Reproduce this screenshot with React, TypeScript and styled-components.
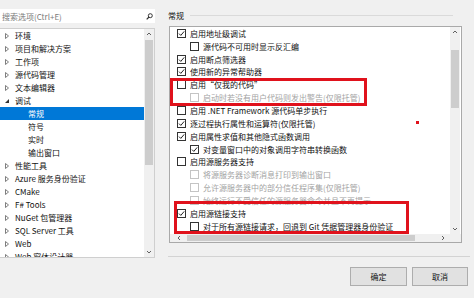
import React from 'react'
import styled, { createGlobalStyle } from 'styled-components'

const Global = createGlobalStyle`
  html, body {
    margin: 0;
    padding: 0;
    background: #f0f0f0;
  }
  body {
    font-family: "Noto Sans CJK SC", "Noto Sans", sans-serif;
    font-size: 8px;
    color: #111;
  }
`

type TreeItem = { label: string; level: number; arrow?: 'open' | 'closed'; selected?: boolean }

const tree: TreeItem[] = [
  { label: '环境', level: 0, arrow: 'closed' },
  { label: '项目和解决方案', level: 0, arrow: 'closed' },
  { label: '工作项', level: 0, arrow: 'closed' },
  { label: '源代码管理', level: 0, arrow: 'closed' },
  { label: '文本编辑器', level: 0, arrow: 'closed' },
  { label: '调试', level: 0, arrow: 'open' },
  { label: '常规', level: 1, selected: true },
  { label: '符号', level: 1 },
  { label: '实时', level: 1 },
  { label: '输出窗口', level: 1 },
  { label: '性能工具', level: 0, arrow: 'closed' },
  { label: 'Azure 服务身份验证', level: 0, arrow: 'closed' },
  { label: 'CMake', level: 0, arrow: 'closed' },
  { label: 'F# Tools', level: 0, arrow: 'closed' },
  { label: 'NuGet 包管理器', level: 0, arrow: 'closed' },
  { label: 'SQL Server 工具', level: 0, arrow: 'closed' },
  { label: 'Web', level: 0, arrow: 'closed' },
  { label: 'Web 窗体设计器', level: 0, arrow: 'closed' },
]

type Option = { text: string; checked?: boolean; indent?: number; disabled?: boolean }

const options: Option[] = [
  { text: '启用地址级调试', checked: true },
  { text: '源代码不可用时显示反汇编', indent: 1 },
  { text: '启用断点筛选器', checked: true },
  { text: '使用新的异常帮助器', checked: true },
  { text: '启用“仅我的代码”' },
  { text: '启动时若没有用户代码则发出警告(仅限托管)', indent: 1, disabled: true },
  { text: '启用 .NET Framework 源代码单步执行' },
  { text: '逐过程执行属性和运算符(仅限托管)', checked: true },
  { text: '启用属性求值和其他隐式函数调用', checked: true },
  { text: '对变量窗口中的对象调用字符串转换函数', checked: true, indent: 1 },
  { text: '启用源服务器支持' },
  { text: '将源服务器诊断消息打印到输出窗口', indent: 1, disabled: true },
  { text: '允许源服务器中的部分信任程序集(仅限托管)', indent: 1, disabled: true },
  { text: '始终运行不受信任的源服务器命令并且不再提示', indent: 1, disabled: true },
  { text: '启用源链接支持', checked: true },
  { text: '对于所有源链接请求，回退到 Git 凭据管理器身份验证', indent: 1 },
]

const Dialog = styled.div`
  position: relative;
  width: 474px;
  height: 298px;
  overflow: hidden;
  background: #f0f0f0;
  display: flex;
`

/* left side */
const LeftPane = styled.div`
  width: 155px;
  padding-top: 9px;
  display: flex;
  flex-direction: column;
  gap: 5px;
`

const Search = styled.div`
  height: 14px;
  background: #fff;
  display: flex;
  align-items: center;
  justify-content: space-between;
  padding: 0 2px 0 2px;
  color: #7a7a7a;
`

const TreeBox = styled.div`
  height: 228px;
  background: #fff;
  border: 1px solid #cfcfcf;
  border-left: none;
  display: flex;
  overflow: hidden;
`

const TreeItems = styled.div`
  flex: 1;
  display: flex;
  flex-direction: column;
`

const TreeRow = styled.div<{ $selected?: boolean }>`
  flex: none;
  height: 13px;
  display: flex;
  align-items: center;
  background: ${(p) => (p.$selected ? '#0078d7' : 'transparent')};
  color: ${(p) => (p.$selected ? '#fff' : '#111')};
  white-space: nowrap;
`

const Arrow = styled.span`
  width: 15px;
  flex: none;
  display: flex;
  justify-content: flex-start;
  padding-left: 5px;
  box-sizing: border-box;
`

const Indent = styled.span`
  width: 28px;
  flex: none;
`

const VScroll = styled.div<{ $thumbTop: number; $thumbHeight: number }>`
  flex: none;
  width: 10px;
  background: #f0f0f0;
  position: relative;
  display: flex;
  flex-direction: column;
  justify-content: space-between;
  align-items: center;
  padding: 2px 0;
  box-sizing: border-box;
  &::before {
    content: '';
    position: absolute;
    left: 1px;
    right: 1px;
    top: ${(p) => p.$thumbTop}px;
    height: ${(p) => p.$thumbHeight}px;
    background: #cdcdcd;
  }
`

/* right side */
const RightPane = styled.div`
  flex: 1;
  padding: 9px 0 0 13px;
  display: flex;
  flex-direction: column;
`

const Heading = styled.div`
  height: 12px;
  display: flex;
  align-items: center;
  gap: 6px;
  padding-right: 21px;
  font-size: 8px;
  &::after {
    content: '';
    flex: 1;
    height: 1px;
    background: #dadada;
  }
`

const OptionBox = styled.div`
  margin: 5px 0 0 1px;
  width: 293px;
  height: 217px;
  box-sizing: border-box;
  border: 1px solid #a9a9a9;
  background: #fff;
  display: grid;
  grid-template-columns: 1fr 11px;
  grid-template-rows: 1fr 8px;
  overflow: hidden;
`

const OptionList = styled.div`
  overflow: hidden;
  display: flex;
  flex-direction: column;
`

const OptionRow = styled.div<{ $indent: number; $disabled?: boolean }>`
  flex: none;
  height: 12.85px;
  display: flex;
  align-items: center;
  gap: 4px;
  padding-left: ${(p) => 7 + p.$indent * 13}px;
  color: ${(p) => (p.$disabled ? '#a3a3a3' : '#111')};
  white-space: nowrap;
`

const Box = styled.span<{ $disabled?: boolean }>`
  width: 7px;
  height: 7px;
  flex: none;
  border: 1px solid ${(p) => (p.$disabled ? '#c4c4c4' : '#333')};
  background: #fff;
  display: flex;
  align-items: center;
  justify-content: center;
`

const HScroll = styled.div`
  background: #f0f0f0;
  display: flex;
  align-items: center;
  padding: 0 0 0 6px;
`

const HThumb = styled.div`
  margin-left: 5px;
  width: 228px;
  height: 6px;
  background: #cdcdcd;
`

const HEnd = styled.div`
  margin-left: auto;
  width: 14px;
  display: flex;
  justify-content: center;
`

const Corner = styled.div`
  background: #f0f0f0;
`

const Separator = styled.div`
  margin: 13px 4px 0 0;
  height: 1px;
  background: #d3d3d3;
`

const Buttons = styled.div`
  margin-top: 10px;
  padding-right: 6px;
  display: flex;
  justify-content: flex-end;
  gap: 5px;
`

const Button = styled.button<{ $w: number }>`
  width: ${(p) => p.$w}px;
  height: 19px;
  box-sizing: border-box;
  border: 1px solid #adadad;
  background: #e1e1e1;
  font-family: inherit;
  font-size: 8px;
  color: #111;
  padding: 0;
`

/* red annotations drawn over the screenshot */
const Mark = styled.div<{ $x: number; $y: number; $w: number; $h: number }>`
  position: absolute;
  left: ${(p) => p.$x}px;
  top: ${(p) => p.$y}px;
  width: ${(p) => p.$w}px;
  height: ${(p) => p.$h}px;
  box-sizing: border-box;
  border: 3px solid #e0121c;
  pointer-events: none;
`

const Dot = styled.div`
  position: absolute;
  left: 416px;
  top: 121px;
  width: 3px;
  height: 3px;
  background: #e0121c;
`

function Chevron({ dir }: { dir: 'up' | 'down' | 'left' | 'right' }) {
  const d = {
    up: 'M1 4 L3 2 L5 4',
    down: 'M1 2 L3 4 L5 2',
    left: 'M4 1 L2 3 L4 5',
    right: 'M2 1 L4 3 L2 5',
  }[dir]
  return (
    <svg width="6" height="6" viewBox="0 0 6 6">
      <path d={d} fill="none" stroke="#606060" strokeWidth="1" />
    </svg>
  )
}

function TreeArrow({ kind }: { kind?: 'open' | 'closed' }) {
  if (kind === 'open')
    return (
      <svg width="4" height="4" viewBox="0 0 4 4">
        <path d="M4 0 L4 4 L0 4 Z" fill="#333" />
      </svg>
    )
  return (
    <svg width="4" height="6" viewBox="0 0 4 6">
      <path d="M0.5 0.5 L3.5 3 L0.5 5.5 Z" fill="none" stroke="#707070" strokeWidth="0.9" />
    </svg>
  )
}

function SearchIcon() {
  return (
    <svg width="7" height="7" viewBox="0 0 7 7">
      <circle cx="4.3" cy="2.7" r="2" fill="none" stroke="#333" strokeWidth="1" />
      <path d="M3 4 L0.7 6.3" stroke="#333" strokeWidth="1.2" />
    </svg>
  )
}

function Check({ checked, disabled }: { checked?: boolean; disabled?: boolean }) {
  return (
    <Box $disabled={disabled}>
      {checked && (
        <svg width="7" height="7" viewBox="0 0 7 7">
          <path d="M1 3.6 L2.8 5.4 L6.2 1.4" fill="none" stroke="#222" strokeWidth="1" />
        </svg>
      )}
    </Box>
  )
}

export default function App() {
  return (
    <Dialog>
      <Global />
      <LeftPane>
        <Search>
          <span>搜索选项(Ctrl+E)</span>
          <SearchIcon />
        </Search>
        <TreeBox>
          <TreeItems>
            {tree.map((t) => (
              <TreeRow key={t.label} $selected={t.selected}>
                {t.level === 0 ? (
                  <Arrow>
                    <TreeArrow kind={t.arrow} />
                  </Arrow>
                ) : (
                  <Indent />
                )}
                {t.label}
              </TreeRow>
            ))}
          </TreeItems>
          <VScroll $thumbTop={11} $thumbHeight={125}>
            <Chevron dir="up" />
            <Chevron dir="down" />
          </VScroll>
        </TreeBox>
      </LeftPane>

      <RightPane>
        <Heading>常规</Heading>
        <OptionBox>
          <OptionList>
            {options.map((o) => (
              <OptionRow key={o.text} $indent={o.indent ?? 0} $disabled={o.disabled}>
                <Check checked={o.checked} disabled={o.disabled} />
                {o.text}
              </OptionRow>
            ))}
          </OptionList>
          <VScroll $thumbTop={23} $thumbHeight={58}>
            <Chevron dir="up" />
            <Chevron dir="down" />
          </VScroll>
          <HScroll>
            <Chevron dir="left" />
            <HThumb />
            <HEnd>
              <Chevron dir="right" />
            </HEnd>
          </HScroll>
          <Corner />
        </OptionBox>
        <Separator />
        <Buttons>
          <Button $w={57}>确定</Button>
          <Button $w={56}>取消</Button>
        </Buttons>
      </RightPane>

      <Mark $x={170} $y={78} $w={197} $h={28} />
      <Mark $x={174} $y={201} $w={235} $h={33} />
      <Dot />
    </Dialog>
  )
}
